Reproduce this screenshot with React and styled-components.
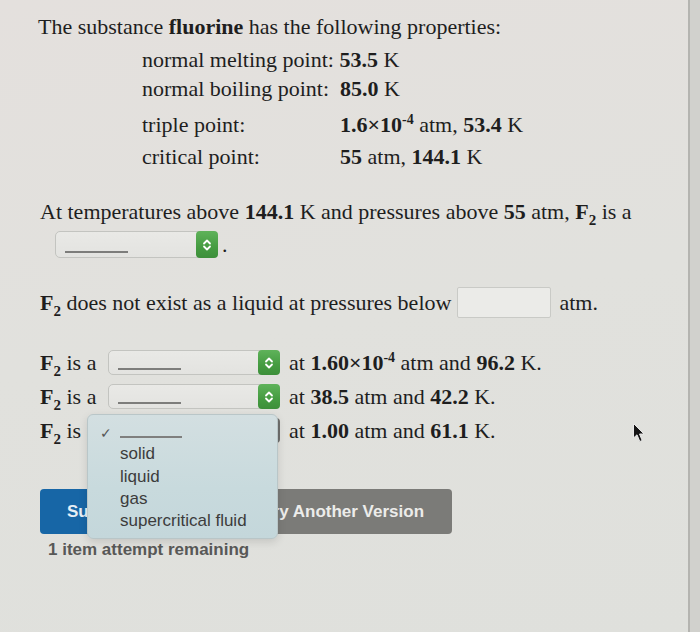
import React from "react";
import styled, { createGlobalStyle } from "styled-components";

const Global = createGlobalStyle`
  html, body { margin: 0; padding: 0; }
  body {
    background: #e0e0dc;
    font-family: "Liberation Serif", "Times New Roman", serif;
    color: #1e1e1e;
  }
`;

const Screen = styled.div`
  display: flex;
  width: 700px;
  height: 632px;
  overflow: hidden;
  background: linear-gradient(170deg, #e4e0dd 0%, #e1e1dd 50%, #dfe0dc 100%);
`;

const Page = styled.div`
  position: relative;
  flex: 1;
  display: flex;
  flex-direction: column;
  padding: 15px 0 0 40px;
`;

const Bezel = styled.div`
  width: 10px;
  border-left: 2px solid #b4b4b0;
  background: #d1d1cd;
`;

const Intro = styled.div`
  font-size: 22px;
  line-height: 24px;
  margin-left: -2px;
  white-space: pre;
`;

const PropList = styled.div`
  display: flex;
  flex-direction: column;
  padding-left: 102px;
`;

const PropRow = styled.div`
  display: grid;
  grid-template-columns: ${(p) => (p.$split ? "198px auto" : "auto")};
  font-size: 22px;
  line-height: 24px;
  margin-top: ${(p) => p.$mt}px;
  white-space: pre;
`;

const B = styled.b`
  font-weight: 700;
`;

const Sup = styled.sup`
  font-size: 14px;
  font-weight: 700;
  line-height: 0;
  vertical-align: 8px;
`;

const Sub = styled.sub`
  font-size: 15px;
  font-weight: 700;
  line-height: 0;
  vertical-align: -6px;
`;

const Sentence = styled.div`
  display: flex;
  align-items: center;
  font-size: 22px;
  line-height: 24px;
  margin-top: ${(p) => p.$mt}px;
  white-space: pre;
`;

const SelectLine = styled.div`
  display: flex;
  align-items: center;
  margin-top: 7px;
  padding-left: 15px;
  font-size: 22px;
  line-height: 24px;
`;

const SelectBox = styled.div`
  position: relative;
  box-sizing: border-box;
  display: flex;
  align-items: flex-end;
  width: ${(p) => p.$w}px;
  height: ${(p) => p.$h}px;
  border: 1px solid #c3c4c0;
  border-radius: 5px;
  background: linear-gradient(180deg, #e9e9e6, #e3e3e0);
  padding: 0 0 4px 9px;
`;

const Blank = styled.span`
  display: block;
  width: 63px;
  height: 0;
  border-bottom: 2px solid #7d7d7b;
`;

const Spin = styled.span`
  margin-left: auto;
  align-self: stretch;
  margin-top: -1px;
  margin-bottom: -5px;
  margin-right: -1px;
  width: 22px;
  display: flex;
  align-items: center;
  justify-content: center;
  border-radius: 4px;
  background: ${(p) =>
    p.$open ? "#6f6f6d" : "linear-gradient(180deg, #5fb25a 0%, #459c41 60%, #3d8f3a 100%)"};
`;

const Dot = styled.span`
  margin-left: 4px;
`;

const TextBox = styled.span`
  display: inline-block;
  box-sizing: border-box;
  width: 94px;
  height: 31px;
  margin: 0 8px 0 6px;
  border: 1px solid #c9cac6;
  border-radius: 2px;
  background: #ebebe8;
`;

const Rows = styled.div`
  display: flex;
  flex-direction: column;
  gap: 9px;
  margin-top: 32px;
`;

const Row = styled.div`
  position: relative;
  display: flex;
  align-items: center;
  height: 25px;
  font-size: 22px;
  line-height: 24px;
  white-space: pre;
`;

const Lead = styled.span`
  width: 68px;
`;

const After = styled.span`
  margin-left: 9px;
`;

const Popup = styled.div`
  position: absolute;
  left: 47px;
  top: -4px;
  width: 191px;
  box-sizing: border-box;
  padding: 8px 0 6px 12px;
  border: 1px solid #b9c6c8;
  border-radius: 6px;
  background: linear-gradient(180deg, #d3dfe1 0%, #c8dadd 60%, #c4d7db 100%);
  box-shadow: 0 3px 8px rgba(0, 0, 0, 0.12);
  font-family: "Liberation Sans", Arial, sans-serif;
  font-size: 17px;
  color: #3c3c3c;
  z-index: 2;
`;

const Option = styled.div`
  display: flex;
  align-items: center;
  height: ${(p) => p.$h || 22}px;
`;

const CheckSlot = styled.span`
  width: 20px;
  font-size: 14px;
  color: #555;
`;

const OptBlank = styled.span`
  display: block;
  width: 62px;
  margin-top: 8px;
  border-bottom: 2px solid #7f7f7e;
`;

const Buttons = styled.div`
  display: flex;
  gap: 18px;
  margin-top: 46px;
  margin-left: 0;
`;

const Button = styled.button`
  height: 45px;
  padding: 0 ${(p) => p.$px}px;
  border: none;
  border-radius: 4px;
  background: ${(p) => (p.$primary ? "#1766a6" : "#7b7b78")};
  color: ${(p) => (p.$primary ? "#e6eef5" : "#ececea")};
  font-family: "Liberation Sans", Arial, sans-serif;
  font-weight: 700;
  font-size: 17px;
`;

const Remaining = styled.div`
  margin-top: 6px;
  margin-left: 8px;
  font-family: "Liberation Sans", Arial, sans-serif;
  font-weight: 700;
  font-size: 17px;
  line-height: 20px;
  color: #585857;
`;

const Cursor = styled.svg`
  position: absolute;
  left: 632px;
  top: 422px;
`;

const Chevrons = () => (
  <svg width="10" height="14" viewBox="0 0 10 14">
    <path d="M2 5.5 L5 2.5 L8 5.5 M2 8.5 L5 11.5 L8 8.5" fill="none" stroke="#fff" strokeWidth="1.8" strokeLinecap="round" strokeLinejoin="round" />
  </svg>
);

const Select = ({ w, h, open }) => (
  <SelectBox $w={w} $h={h}>
    <Blank />
    <Spin $open={open}>{!open && <Chevrons />}</Spin>
  </SelectBox>
);

const F2 = () => (
  <B>
    F<Sub>2</Sub>
  </B>
);

export default function App() {
  return (
    <>
      <Global />
      <Screen>
        <Page>
          <Intro>
            The substance <B>fluorine</B> has the following properties:
          </Intro>
          <PropList>
            <PropRow $mt={9}>
              <span>
                normal melting point: <B>53.5</B> K
              </span>
            </PropRow>
            <PropRow $mt={5}>
              <span>
                normal boiling point:  <B>85.0</B> K
              </span>
            </PropRow>
            <PropRow $mt={12} $split>
              <span>triple point:</span>
              <span>
                <B>1.6×10</B>
                <Sup>-4</Sup> atm, <B>53.4</B> K
              </span>
            </PropRow>
            <PropRow $mt={8} $split>
              <span>critical point:</span>
              <span>
                <B>55</B> atm, <B>144.1</B> K
              </span>
            </PropRow>
          </PropList>

          <Sentence $mt={31}>
            At temperatures above <B>144.1</B> K and pressures above <B>55</B> atm, <F2 /> is a
          </Sentence>
          <SelectLine>
            <Select w={163} h={27} />
            <Dot>.</Dot>
          </SelectLine>

          <Sentence $mt={29}>
            <F2 /> does not exist as a liquid at pressures below
            <TextBox />
            atm.
          </Sentence>

          <Rows>
            <Row>
              <Lead>
                <F2 /> is a
              </Lead>
              <Select w={172} h={25} />
              <After>
                at <B>1.60×10</B>
                <Sup>-4</Sup> atm and <B>96.2</B> K.
              </After>
            </Row>
            <Row>
              <Lead>
                <F2 /> is a
              </Lead>
              <Select w={172} h={25} />
              <After>
                at <B>38.5</B> atm and <B>42.2</B> K.
              </After>
            </Row>
            <Row>
              <Lead>
                <F2 /> is a
              </Lead>
              <Select w={172} h={25} open />
              <After>
                at <B>1.00</B> atm and <B>61.1</B> K.
              </After>
              <Popup>
                <Option $h={20}>
                  <CheckSlot>✓</CheckSlot>
                  <OptBlank />
                </Option>
                <Option>
                  <CheckSlot />
                  solid
                </Option>
                <Option $h={23}>
                  <CheckSlot />
                  liquid
                </Option>
                <Option>
                  <CheckSlot />
                  gas
                </Option>
                <Option>
                  <CheckSlot />
                  supercritical fluid
                </Option>
              </Popup>
            </Row>
          </Rows>

          <Buttons>
            <Button $primary $px={27}>Submit Answer</Button>
            <Button $px={28}>Try Another Version</Button>
          </Buttons>
          <Remaining>1 item attempt remaining</Remaining>

          <Cursor width="14" height="22" viewBox="0 0 14 22">
            <path d="M1.5 1.5 L1.5 16 L5 12.8 L7.8 19.5 L10.2 18.5 L7.5 12 L12 12 Z" fill="#151515" stroke="#e8e8e8" strokeWidth="1" strokeLinejoin="round" />
          </Cursor>
        </Page>
        <Bezel />
      </Screen>
    </>
  );
}
